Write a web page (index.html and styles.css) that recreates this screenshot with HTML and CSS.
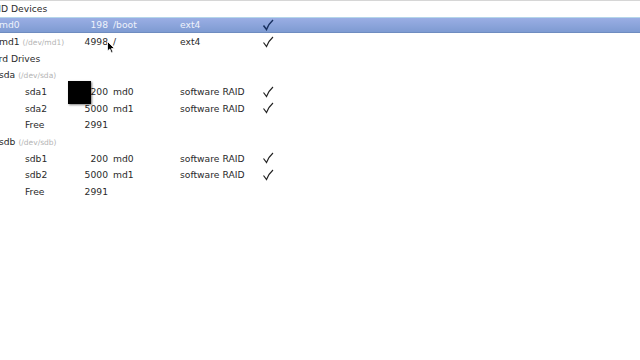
FILE: index.html
```html
<!DOCTYPE html>
<html lang="en">
<head>
  <meta charset="UTF-8">
  <title>Partitions</title>
  <link rel="stylesheet" href="styles.css">
</head>
<body>
  <div class="tree">
    <div class="row group first"><span class="name">RAID Devices</span></div>
    <div class="row selected">
      <span class="name lvl1">md0</span><span class="size">198</span><span class="mount">/boot</span><span class="type">ext4</span>
      <span class="check"><svg viewBox="0 0 12 12" width="12" height="12"><path d="M1.5 6.5 L4.5 10.5 Q6.5 5 11 1" /></svg></span>
    </div>
    <div class="row">
      <span class="name lvl1">md1 <small>(/dev/md1)</small></span><span class="size">4998</span><span class="mount">/</span><span class="type">ext4</span>
      <span class="check"><svg viewBox="0 0 12 12" width="12" height="12"><path d="M1.5 6.5 L4.5 10.5 Q6.5 5 11 1" /></svg></span>
    </div>
    <div class="row group"><span class="name">Hard Drives</span></div>
    <div class="row"><span class="name lvl1">sda <small>(/dev/sda)</small></span></div>
    <div class="row">
      <span class="name lvl2">sda1</span><span class="size">200</span><span class="mount">md0</span><span class="type">software RAID</span>
      <span class="check"><svg viewBox="0 0 12 12" width="12" height="12"><path d="M1.5 6.5 L4.5 10.5 Q6.5 5 11 1" /></svg></span>
    </div>
    <div class="row">
      <span class="name lvl2">sda2</span><span class="size">5000</span><span class="mount">md1</span><span class="type">software RAID</span>
      <span class="check"><svg viewBox="0 0 12 12" width="12" height="12"><path d="M1.5 6.5 L4.5 10.5 Q6.5 5 11 1" /></svg></span>
    </div>
    <div class="row"><span class="name lvl2">Free</span><span class="size">2991</span></div>
    <div class="row"><span class="name lvl1">sdb <small>(/dev/sdb)</small></span></div>
    <div class="row">
      <span class="name lvl2">sdb1</span><span class="size">200</span><span class="mount">md0</span><span class="type">software RAID</span>
      <span class="check"><svg viewBox="0 0 12 12" width="12" height="12"><path d="M1.5 6.5 L4.5 10.5 Q6.5 5 11 1" /></svg></span>
    </div>
    <div class="row">
      <span class="name lvl2">sdb2</span><span class="size">5000</span><span class="mount">md1</span><span class="type">software RAID</span>
      <span class="check"><svg viewBox="0 0 12 12" width="12" height="12"><path d="M1.5 6.5 L4.5 10.5 Q6.5 5 11 1" /></svg></span>
    </div>
    <div class="row"><span class="name lvl2">Free</span><span class="size">2991</span></div>
  </div>

  <div class="blot"></div>
  <svg class="cursor" viewBox="0 0 9 13" width="9" height="13">
    <path d="M0.5 0.5 L0.5 10 L2.8 8 L4.5 12 L6 11.3 L4.4 7.5 L7.5 7.5 Z" />
  </svg>
</body>
</html>
```

FILE: styles.css
```css
* {
  margin: 0;
  box-sizing: border-box;
}
body {
  margin: 0;
  background: #fff;
  font-family: "DejaVu Sans", sans-serif;
  font-size: 9.2px;
  color: #2a2a2a;
  overflow: hidden;
}
.tree {
  border-top: 1px solid #d6d6d6;
}
.row {
  display: grid;
  grid-template-columns: 97px 25px 72px 82px 14px;
  height: 16.67px;
  align-items: center;
  margin-left: -14px;
  white-space: nowrap;
}
.row.first {
  height: 15.67px;
}
.row.selected {
  background: linear-gradient(#9aaee4, #7e9bd2);
  border-top: 1px solid #b5d6ea;
  border-bottom: 1px solid #6f8cc0;
  color: #eef2fb;
}
.name.lvl1 {
  padding-left: 13px;
}
.name.lvl2 {
  padding-left: 39px;
}
.name small {
  font-size: 7.5px;
  color: #b4b4b4;
}
.size {
  text-align: right;
}
.mount {
  padding-left: 5px;
}
.check svg {
  display: block;
  fill: none;
  stroke: #222;
  stroke-width: 1.2;
}
.selected .check svg {
  stroke: #18305f;
  stroke-width: 1.5;
}
.blot {
  position: absolute;
  left: 68px;
  top: 81px;
  width: 23px;
  height: 23px;
  background: #000;
  box-shadow: 1px 1px 2px rgba(0, 0, 0, 0.5);
}
.cursor {
  position: absolute;
  left: 107px;
  top: 41px;
}
.cursor path {
  fill: #000;
  stroke: #fff;
  stroke-width: 0.8;
}
```
